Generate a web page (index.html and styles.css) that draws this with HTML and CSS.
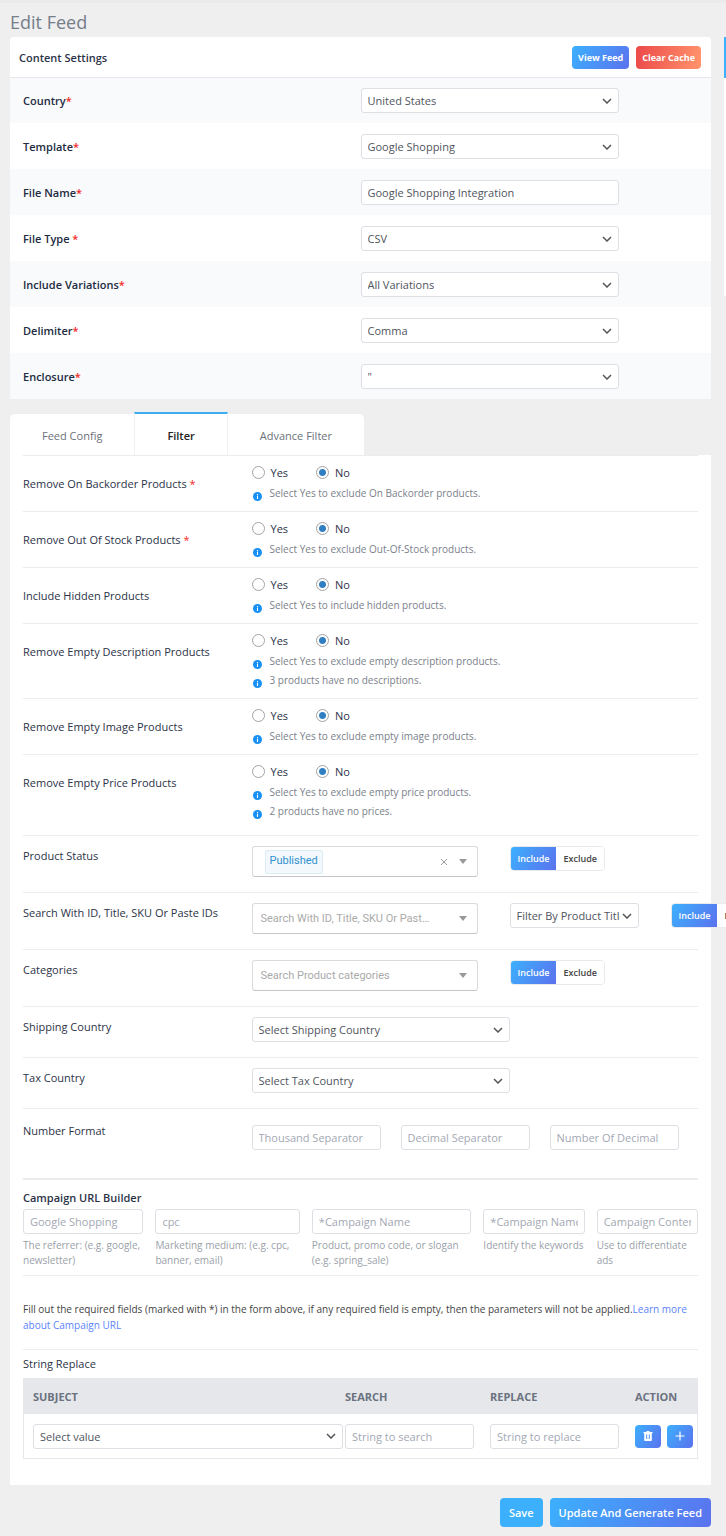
FILE: index.html
```html
<!DOCTYPE html>
<html lang="en">
<head>
    <meta charset="UTF-8">
    <meta name="viewport" content="width=device-width, initial-scale=1.0">
    <title>Edit Feed</title>
    <link rel="stylesheet" href="styles.css">
</head>
<body>
    <svg class="sprite" aria-hidden="true">
        <symbol id="info" viewBox="0 0 10 10">
            <circle cx="5" cy="5" r="5" fill="#1890f5"/>
            <rect x="4.4" y="2.2" width="1.2" height="1.3" fill="#fff"/>
            <rect x="4.4" y="4.2" width="1.2" height="3.6" fill="#fff"/>
        </symbol>
    </svg>
    <div class="page">
        <main>
            <h1>Edit Feed</h1>
            <section class="card">
                <div class="card-header">
                    <h2>Content Settings</h2>
                    <div class="card-actions">
                        <button type="button" class="btn btn-small">View Feed</button>
                        <button type="button" class="btn btn-small btn-danger">Clear Cache</button>
                    </div>
                </div>
                <div class="setting">
                    <label for="country">Country<span class="req">*</span></label>
                    <select id="country" class="control"><option>United States</option></select>
                </div>
                <div class="setting">
                    <label for="template">Template<span class="req">*</span></label>
                    <select id="template" class="control"><option>Google Shopping</option></select>
                </div>
                <div class="setting">
                    <label for="fileName">File Name<span class="req">*</span></label>
                    <input type="text" id="fileName" class="control" value="Google Shopping Integration">
                </div>
                <div class="setting">
                    <label for="fileType">File Type <span class="req">*</span></label>
                    <select id="fileType" class="control"><option>CSV</option></select>
                </div>
                <div class="setting">
                    <label for="variations">Include Variations<span class="req">*</span></label>
                    <select id="variations" class="control"><option>All Variations</option></select>
                </div>
                <div class="setting">
                    <label for="delimiter">Delimiter<span class="req">*</span></label>
                    <select id="delimiter" class="control"><option>Comma</option></select>
                </div>
                <div class="setting">
                    <label for="enclosure">Enclosure<span class="req">*</span></label>
                    <select id="enclosure" class="control"><option>"</option></select>
                </div>
            </section>

            <div class="tabs">
                <button type="button" class="tab">Feed Config</button>
                <button type="button" class="tab active">Filter</button>
                <button type="button" class="tab">Advance Filter</button>
            </div>
            <section class="panel">
                <div class="filters">
                    <div class="filter">
                        <span class="filter-label">Remove On Backorder Products <span class="req">*</span></span>
                        <div>
                            <div class="radios">
                                <label><input type="radio" name="backorder"> Yes</label>
                                <label><input type="radio" name="backorder" checked> No</label>
                            </div>
                            <p class="help"><svg><use href="#info"/></svg>Select Yes to exclude On Backorder products.</p>
                        </div>
                    </div>
                    <div class="filter">
                        <span class="filter-label">Remove Out Of Stock Products <span class="req">*</span></span>
                        <div>
                            <div class="radios">
                                <label><input type="radio" name="stock"> Yes</label>
                                <label><input type="radio" name="stock" checked> No</label>
                            </div>
                            <p class="help"><svg><use href="#info"/></svg>Select Yes to exclude Out-Of-Stock products.</p>
                        </div>
                    </div>
                    <div class="filter">
                        <span class="filter-label">Include Hidden Products</span>
                        <div>
                            <div class="radios">
                                <label><input type="radio" name="hidden"> Yes</label>
                                <label><input type="radio" name="hidden" checked> No</label>
                            </div>
                            <p class="help"><svg><use href="#info"/></svg>Select Yes to include hidden products.</p>
                        </div>
                    </div>
                    <div class="filter">
                        <span class="filter-label">Remove Empty Description Products</span>
                        <div>
                            <div class="radios">
                                <label><input type="radio" name="description"> Yes</label>
                                <label><input type="radio" name="description" checked> No</label>
                            </div>
                            <p class="help"><svg><use href="#info"/></svg>Select Yes to exclude empty description products.</p>
                            <p class="help"><svg><use href="#info"/></svg>3 products have no descriptions.</p>
                        </div>
                    </div>
                    <div class="filter">
                        <span class="filter-label">Remove Empty Image Products</span>
                        <div>
                            <div class="radios">
                                <label><input type="radio" name="image"> Yes</label>
                                <label><input type="radio" name="image" checked> No</label>
                            </div>
                            <p class="help"><svg><use href="#info"/></svg>Select Yes to exclude empty image products.</p>
                        </div>
                    </div>
                    <div class="filter filter-last">
                        <span class="filter-label">Remove Empty Price Products</span>
                        <div>
                            <div class="radios">
                                <label><input type="radio" name="price"> Yes</label>
                                <label><input type="radio" name="price" checked> No</label>
                            </div>
                            <p class="help"><svg><use href="#info"/></svg>Select Yes to exclude empty price products.</p>
                            <p class="help"><svg><use href="#info"/></svg>2 products have no prices.</p>
                        </div>
                    </div>

                    <div class="field">
                        <label for="status">Product Status</label>
                        <div class="field-body">
                            <div class="multiselect">
                                <span class="tag">Published</span>
                                <input type="text" id="status">
                                <button type="button" class="clear" aria-label="Clear">
                                    <svg viewBox="0 0 8 8"><path d="M1 1l6 6M7 1L1 7" stroke="#999" stroke-width="1"/></svg>
                                </button>
                                <span class="caret"></span>
                            </div>
                            <div class="toggle">
                                <button type="button" class="on">Include</button>
                                <button type="button">Exclude</button>
                            </div>
                        </div>
                    </div>
                    <div class="field">
                        <label for="search">Search With ID, Title, SKU Or Paste IDs</label>
                        <div class="field-body">
                            <div class="multiselect">
                                <input type="text" id="search" placeholder="Search With ID, Title, SKU Or Paste IDs">
                                <span class="caret"></span>
                            </div>
                            <select class="control control-half" aria-label="Filter by"><option>Filter By Product Title</option></select>
                            <div class="toggle">
                                <button type="button" class="on">Include</button>
                                <button type="button">Exclude</button>
                            </div>
                        </div>
                    </div>
                    <div class="field">
                        <label for="categories">Categories</label>
                        <div class="field-body">
                            <div class="multiselect">
                                <input type="text" id="categories" placeholder="Search Product categories">
                                <span class="caret"></span>
                            </div>
                            <div class="toggle">
                                <button type="button" class="on">Include</button>
                                <button type="button">Exclude</button>
                            </div>
                        </div>
                    </div>
                    <div class="field">
                        <label for="shipping">Shipping Country</label>
                        <select id="shipping" class="control"><option>Select Shipping Country</option></select>
                    </div>
                    <div class="field">
                        <label for="tax">Tax Country</label>
                        <select id="tax" class="control"><option>Select Tax Country</option></select>
                    </div>
                    <div class="field field-number">
                        <label for="thousand">Number Format</label>
                        <div class="numbers">
                            <input type="text" id="thousand" class="control control-half" placeholder="Thousand Separator">
                            <input type="text" class="control control-half" placeholder="Decimal Separator" aria-label="Decimal Separator">
                            <input type="text" class="control control-half" placeholder="Number Of Decimal" aria-label="Number Of Decimal">
                        </div>
                    </div>
                </div>

                <div class="campaign">
                    <h3>Campaign URL Builder</h3>
                    <div class="campaign-grid">
                        <label><input type="text" class="control" placeholder="Google Shopping">The referrer: (e.g. google, newsletter)</label>
                        <label><input type="text" class="control" placeholder="cpc">Marketing medium: (e.g. cpc, banner, email)</label>
                        <label><input type="text" class="control" placeholder="*Campaign Name">Product, promo code, or slogan (e.g. spring_sale)</label>
                        <label><input type="text" class="control" placeholder="*Campaign Name">Identify the keywords</label>
                        <label><input type="text" class="control" placeholder="Campaign Content">Use to differentiate ads</label>
                    </div>
                </div>
                <p class="note">Fill out the required fields (marked with *) in the form above, if any required field is empty, then the parameters will not be applied.<a href="#">Learn more about Campaign URL</a></p>

                <div class="replace">
                    <h3>String Replace</h3>
                    <table>
                        <colgroup>
                            <col>
                            <col class="col-text">
                            <col class="col-text">
                            <col class="col-action">
                        </colgroup>
                        <thead>
                            <tr>
                                <th class="first">Subject</th>
                                <th>Search</th>
                                <th>Replace</th>
                                <th>Action</th>
                            </tr>
                        </thead>
                        <tbody>
                            <tr>
                                <td class="first"><select class="control" aria-label="Subject"><option>Select value</option></select></td>
                                <td><input type="text" class="control control-half" placeholder="String to search" aria-label="Search"></td>
                                <td><input type="text" class="control control-half" placeholder="String to replace" aria-label="Replace"></td>
                                <td>
                                    <div class="icon-buttons">
                                        <button type="button" class="btn btn-icon" aria-label="Delete">
                                            <svg viewBox="0 0 12 12"><path d="M1.500 2h3V1h3v1h3v1.200h-9z" fill="#fff"/><path d="M2.200 2.800h7.600V10.200a.8.8 0 0 1-.8.8H3a.8.8 0 0 1-.8-.8z" fill="#fff"/><path d="M4.700 4.500v4.500M7.300 4.500v4.500" stroke="#4d93f7" stroke-width="1"/></svg>
                                        </button>
                                        <button type="button" class="btn btn-icon" aria-label="Add">
                                            <svg viewBox="0 0 12 12"><path d="M6 1.500v9M1.500 6h9" stroke="#fff" stroke-width="1.200"/></svg>
                                        </button>
                                    </div>
                                </td>
                            </tr>
                        </tbody>
                    </table>
                </div>
            </section>
            <div class="footer">
                <button type="button" class="btn btn-plain">Save</button>
                <button type="button" class="btn">Update And Generate Feed</button>
            </div>
        </main>
        <aside>
            <div class="aside-header"></div>
            <div class="aside-body"></div>
        </aside>
    </div>
</body>
</html>
```

FILE: styles.css
```css
* {
    box-sizing: border-box;
}
body {
    margin: 0;
    background: #efefef;
    font-family: "Open Sans", "Noto Sans", sans-serif;
    font-size: 11px;
    color: #2c3347;
}
h1, h2, h3, p {
    margin: 0;
}
button, input, select {
    font: inherit;
}
button {
    cursor: pointer;
}
.sprite {
    position: absolute;
    width: 0;
    height: 0;
}

.page {
    display: grid;
    grid-template-columns: minmax(0, 1fr) 2px;
    gap: 13px;
    padding-left: 10px;
    border-top: 3px solid #ebebeb;
    overflow: hidden;
}
h1 {
    height: 34px;
    padding-top: 7px;
    font-size: 18px;
    line-height: 24px;
    font-weight: 400;
    color: #757d89;
}
.req {
    color: #f02a2a;
}

/* buttons */
.btn {
    height: 29px;
    padding: 0 9px;
    border: 0;
    border-radius: 4px;
    background: linear-gradient(120deg, #3cb0fd, #5b72ee);
    color: #fff;
    font-weight: 600;
    white-space: nowrap;
}
.btn-small {
    height: 23px;
    padding: 0 6px;
    font-size: 9px;
    font-weight: 700;
}
.btn-danger {
    background: linear-gradient(100deg, #ec4949, #ff946c);
}
.btn-plain {
    background: #3cb0fd;
}
.btn-icon {
    display: flex;
    align-items: center;
    justify-content: center;
    width: 26px;
    height: 23px;
    padding: 0;
}
.btn-icon svg {
    width: 12px;
    height: 12px;
}

/* inputs */
.control {
    display: block;
    width: 258px;
    height: 25px;
    padding: 0 6px;
    border: 1px solid #dcdfe4;
    border-radius: 3px;
    background: #fff;
    color: #50555d;
    font-size: 11px;
}
select.control {
    appearance: none;
    padding-right: 18px;
    background: #fff url("data:image/svg+xml,%3Csvg xmlns='http://www.w3.org/2000/svg' viewBox='0 0 10 6'%3E%3Cpath d='M1 1l4 4 4-4' fill='none' stroke='%23555' stroke-width='1.500'/%3E%3C/svg%3E") no-repeat right 6px center / 10px 6px;
}
.control-half {
    width: 129px;
}
::placeholder {
    color: #a3a8b3;
    opacity: 1;
}

/* content settings */
.card {
    background: #fff;
    border-radius: 3px 3px 0 0;
}
.card-header {
    display: flex;
    align-items: center;
    justify-content: space-between;
    height: 41px;
    padding: 0 10px 0 9px;
    border-bottom: 1px solid #e6e7ea;
}
.card-header h2 {
    font-size: 11px;
    font-weight: 600;
}
.card-actions {
    display: flex;
    gap: 7px;
}
.setting {
    display: grid;
    grid-template-columns: 50% 1fr;
    align-items: center;
    padding: 11px 13px 10px;
    color: #222b3f;
    font-weight: 600;
}
.setting:nth-child(2) {
    padding-top: 10px;
}
.setting:nth-child(even) {
    background: #f9fafc;
}
.setting .control {
    font-weight: 400;
}

/* tabs */
.tabs {
    display: flex;
    width: fit-content;
    margin-top: 13px;
}
.tab {
    height: 43px;
    padding: 2px 32px 0;
    border: 0;
    border-top: 2px solid transparent;
    background: #fff padding-box;
    color: #6b717a;
    font-weight: 500;
}
.tab:first-child {
    border-radius: 6px 0 0 0;
}
.tab:last-child {
    border-radius: 0 6px 0 0;
}
.tab.active {
    border: 1px solid #eef0f2;
    border-width: 2px 1px 0;
    border-top-color: #3caef0;
    color: #222;
    font-weight: 600;
}

/* filters */
.panel {
    padding: 0 13px 26px;
    background: #fff;
}
.filters {
    border-top: 1px solid #ebecee;
}
.filter {
    display: grid;
    grid-template-columns: calc(34% - 1px) 1fr;
    padding: 6px 0 8px;
    border-bottom: 1px solid #ebecee;
}
.filter-last {
    padding-bottom: 14px;
}
.filter-label {
    padding-top: 12px;
    line-height: 20px;
    font-weight: 500;
}
.radios {
    display: flex;
    height: 20px;
    margin-bottom: 2px;
    gap: 28px;
}
.radios label {
    display: flex;
    align-items: center;
    gap: 6px;
    font-weight: 500;
}
.radios input {
    appearance: none;
    width: 13px;
    height: 13px;
    margin: 0;
    border: 1px solid #a0a3a7;
    border-radius: 50%;
    background: #fff;
}
.radios input:checked {
    background: radial-gradient(circle, #2f7fc2 3px, #fff 4px);
}
.help {
    display: flex;
    align-items: center;
    gap: 8px;
    padding-left: 1px;
    line-height: 19px;
    font-size: 10px;
    color: #7b818b;
}
.help svg {
    width: 9px;
    height: 9px;
    margin-top: 6px;
}

/* fields */
.field {
    display: grid;
    grid-template-columns: calc(34% - 1px) 1fr;
    padding: 10px 0 15px;
    border-bottom: 1px solid #ebecee;
}
.field > label {
    line-height: 20px;
    font-weight: 500;
}
.field-number {
    padding: 16px 0 28px;
    border-bottom-width: 2px;
}
.field-number > label {
    line-height: 12px;
}
.field-body {
    display: flex;
    gap: 32px;
    min-width: 0;
}
.field-body > * {
    flex: none;
}
.numbers {
    display: flex;
    gap: 20px;
}
.multiselect {
    display: flex;
    align-items: center;
    width: 226px;
    height: 31px;
    padding: 0 10px 0 8px;
    border: 1px solid #d9dbde;
    border-bottom-color: #c3c5c8;
    border-radius: 3px;
    font-family: Roboto, sans-serif;
}
.multiselect input {
    flex: 1;
    min-width: 0;
    margin-right: 28px;
    padding: 0;
    border: 0;
    background: none;
    text-overflow: ellipsis;
}
.multiselect ::placeholder {
    color: #aaa;
}
.tag {
    height: 24px;
    margin-left: 4px;
    padding: 0 4px;
    border: 1px solid #dcecf5;
    border-radius: 2px;
    background: #f2f8fc;
    line-height: 20px;
    color: #3090d0;
}
.clear {
    width: 8px;
    height: 8px;
    margin-right: 11px;
    padding: 0;
    border: 0;
    background: none;
    line-height: 0;
}
.tag + input {
    margin-right: 0;
}
.caret {
    border: 4px solid transparent;
    border-top: 5px solid #999;
    border-bottom: 0;
}
.toggle {
    display: flex;
    height: 25px;
    border: 1px solid #e8eaed;
    border-radius: 4px;
    background: #fff;
    overflow: hidden;
}
.toggle button {
    padding: 0 7px;
    border: 0;
    background: #fff;
    color: #444;
    font-size: 9px;
    font-weight: 600;
}
.toggle .on {
    background: linear-gradient(120deg, #3cb0fd, #5b72ee);
    color: #fff;
}

/* campaign */
h3 {
    font-size: 11px;
    line-height: 18px;
    font-weight: 500;
}
.campaign {
    padding: 9px 0 7px;
    border-bottom: 1px solid #ebecee;
}
.campaign h3 {
    font-weight: 600;
}
.campaign-grid {
    display: grid;
    grid-template-columns: 120fr 144fr 159fr 101fr 101fr;
    gap: 12px;
    margin-top: 2px;
}
.campaign-grid label {
    min-width: 0;
    line-height: 15px;
    font-size: 10px;
    color: #9a9fa9;
}
.campaign-grid .control {
    width: 100%;
    margin-bottom: 4px;
}
.note {
    padding: 25px 0 16px;
    border-bottom: 1px solid #ebecee;
    line-height: 16px;
    font-size: 10px;
    color: #444;
}
.note a {
    color: #5b84fb;
    text-decoration: none;
}

/* string replace */
.replace {
    padding-top: 5px;
}
table {
    width: 100%;
    margin-top: 5px;
    border: 1px solid #e5e7eb;
    border-spacing: 0;
    table-layout: fixed;
}
.col-text {
    width: 145px;
}
.col-action {
    width: 62px;
}
th, td {
    padding: 0;
    text-align: left;
}
th.first, td.first {
    padding-left: 9px;
}
th {
    height: 35px;
    background: #e5e7eb;
    color: #6b7280;
    font-weight: 700;
    text-transform: uppercase;
}
td {
    height: 44px;
}
td.first .control {
    width: calc(100% - 2px);
}
.icon-buttons {
    display: flex;
    gap: 6px;
}
.footer {
    display: flex;
    justify-content: flex-end;
    gap: 7px;
    padding: 13px 0 9px;
}

aside {
    padding-top: 34px;
}
.aside-header {
    height: 41px;
    background: #3cb0fd;
}
.aside-body {
    height: 218px;
    background: #fff;
}
```
